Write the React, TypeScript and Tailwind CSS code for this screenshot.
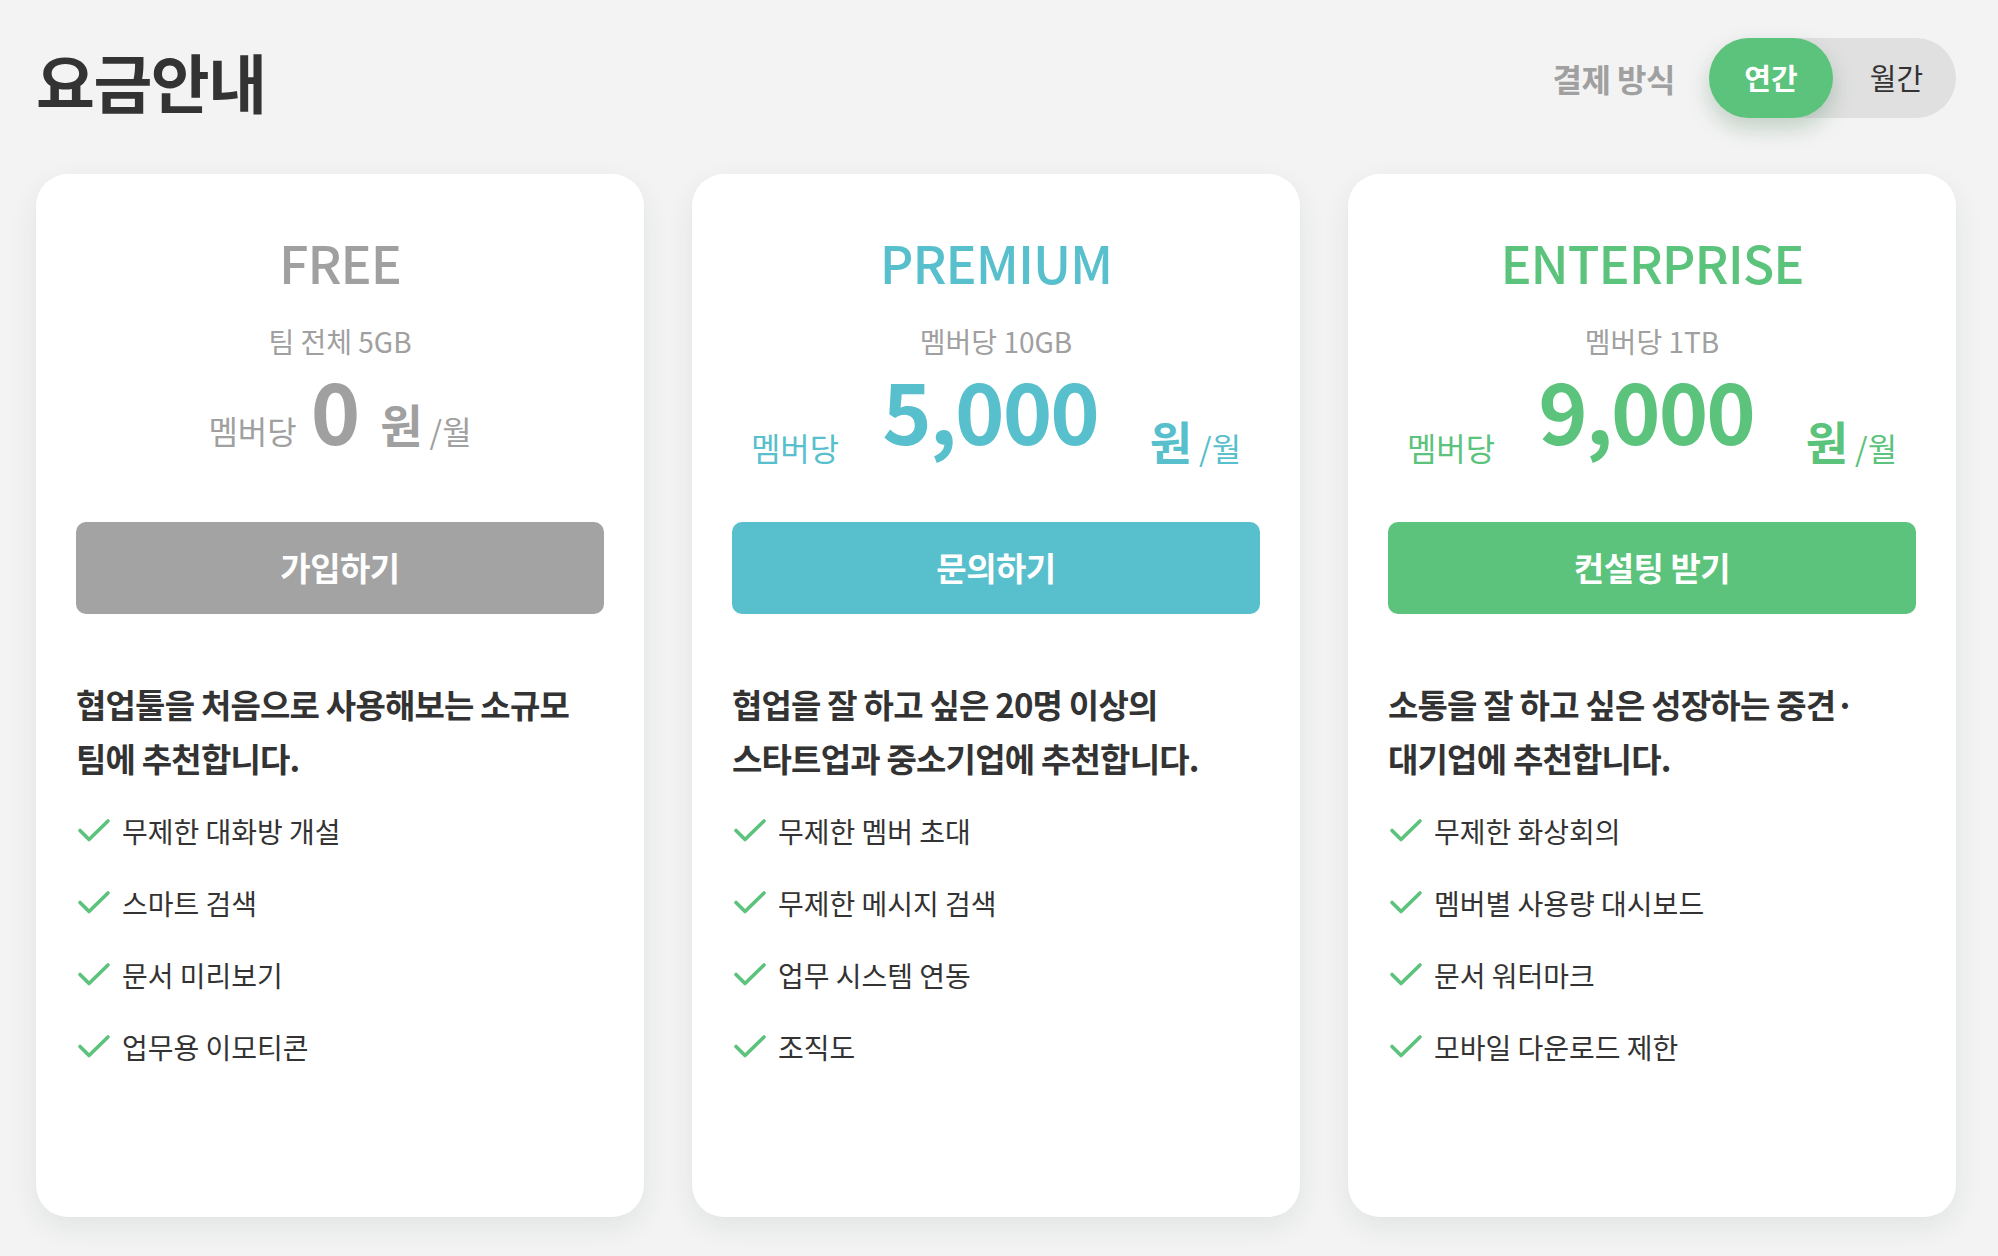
import React from "react";

const FONT = { fontFamily: '"Noto Sans CJK KR", "Noto Sans", sans-serif' };

type Plan = {
  name: string;
  storage: string;
  price: string;
  color: string;
  nameColor: string;
  btnBg: string;
  btnText: string;
  drop: boolean;
  gapA: string;
  gapB: string;
  desc: [string, string];
  features: string[];
};

const plans: Plan[] = [
  {
    name: "FREE",
    storage: "팀 전체 5GB",
    price: "0",
    color: "text-[#a0a0a0]",
    nameColor: "text-[#a0a0a0]",
    btnBg: "bg-[#a3a3a3]",
    btnText: "가입하기",
    drop: false,
    gapA: "ml-[14px]",
    gapB: "ml-[22px]",
    desc: ["협업툴을 처음으로 사용해보는 소규모", "팀에 추천합니다."],
    features: ["무제한 대화방 개설", "스마트 검색", "문서 미리보기", "업무용 이모티콘"],
  },
  {
    name: "PREMIUM",
    storage: "멤버당 10GB",
    price: "5,000",
    color: "text-[#58bfcc]",
    nameColor: "text-[#58bfcc]",
    btnBg: "bg-[#58bfcc]",
    btnText: "문의하기",
    drop: true,
    gapA: "ml-[43px]",
    gapB: "ml-[52px]",
    desc: ["협업을 잘 하고 싶은 20명 이상의", "스타트업과 중소기업에 추천합니다."],
    features: ["무제한 멤버 초대", "무제한 메시지 검색", "업무 시스템 연동", "조직도"],
  },
  {
    name: "ENTERPRISE",
    storage: "멤버당 1TB",
    price: "9,000",
    color: "text-[#5bc37b]",
    nameColor: "text-[#5bc37b]",
    btnBg: "bg-[#5bc37b]",
    btnText: "컨설팅 받기",
    drop: true,
    gapA: "ml-[43px]",
    gapB: "ml-[52px]",
    desc: ["소통을 잘 하고 싶은 성장하는 중견·", "대기업에 추천합니다."],
    features: ["무제한 화상회의", "멤버별 사용량 대시보드", "문서 워터마크", "모바일 다운로드 제한"],
  },
];

function Check() {
  return (
    <svg width="36" height="26" viewBox="0 0 36 26" className="shrink-0">
      <polyline
        points="4,12.5 13,21.5 32,3"
        fill="none"
        stroke="#5bc37b"
        strokeWidth="3.6"
        strokeLinecap="round"
        strokeLinejoin="round"
      />
    </svg>
  );
}

function Card({ p }: { p: Plan }) {
  const sideMb = p.drop ? "mb-[4px]" : "mb-[21px]";
  return (
    <div className="flex-1 h-[1043px] bg-white rounded-[32px] shadow-[0_10px_28px_rgba(30,50,50,0.08)] px-10 pt-[60px] flex flex-col">
      <div className={`text-center text-[52px] leading-[56px] font-medium tracking-[-1px] ${p.nameColor}`}>{p.name}</div>
      <div className="mt-[37px] text-center text-[28px] leading-none text-[#a0a0a0]">{p.storage}</div>
      <div className={`mt-[8px] h-[104px] flex items-end justify-center ${p.color}`}>
        <span className={`text-[32px] leading-none ${sideMb}`}>멤버당</span>
        <span className={`${p.gapA} text-[84px] leading-[64px] font-bold tracking-[-2px] mb-[26px]`}>{p.price}</span>
        <span className={`${p.gapB} text-[46px] leading-none font-bold ${sideMb}`}>원</span>
        <span className={`ml-[7px] text-[32px] leading-none ${sideMb}`}>/월</span>
      </div>
      <div
        className={`mt-[55px] h-[92px] rounded-[10px] ${p.btnBg} flex items-center justify-center text-white text-[33px] font-bold tracking-[-0.5px]`}
      >
        {p.btnText}
      </div>
      <div className="mt-[63px] text-[33px] leading-[54px] font-bold text-[#333333] tracking-[-0.8px]">
        <div>{p.desc[0]}</div>
        <div>{p.desc[1]}</div>
      </div>
      <ul className="mt-[28px] flex flex-col gap-[36px]">
        {p.features.map((f) => (
          <li key={f} className="flex items-center gap-[10px] h-[36px]">
            <Check />
            <span className="text-[28px] leading-[36px] text-[#333333]">{f}</span>
          </li>
        ))}
      </ul>
    </div>
  );
}

export default function App() {
  return (
    <div className="min-h-screen w-full bg-[#f3f3f3] pl-[36px] pr-[42px] pt-[38px] pb-[40px]" style={FONT}>
      <div className="flex items-center justify-between h-[80px]">
        <h1 className="text-[64px] leading-none font-bold text-[#333333] tracking-[-1.5px] mt-[4px]">요금안내</h1>
        <div className="flex items-center">
          <span className="text-[32px] font-bold text-[#a0a0a0] mr-[34px] tracking-[-0.5px]">결제 방식</span>
          <div className="flex h-[80px] w-[247px] rounded-full bg-[#e0e0e0]">
            <div className="h-[80px] w-[124px] rounded-full bg-[#5bc37b] shadow-[0_10px_22px_rgba(60,120,80,0.28)] flex items-center justify-center text-white text-[29px] font-bold">
              연간
            </div>
            <div className="flex-1 flex items-center justify-center text-[29px] text-[#333333] pl-[4px]">월간</div>
          </div>
        </div>
      </div>
      <div className="mt-[56px] flex gap-[48px]">
        {plans.map((p) => (
          <Card key={p.name} p={p} />
        ))}
      </div>
    </div>
  );
}
